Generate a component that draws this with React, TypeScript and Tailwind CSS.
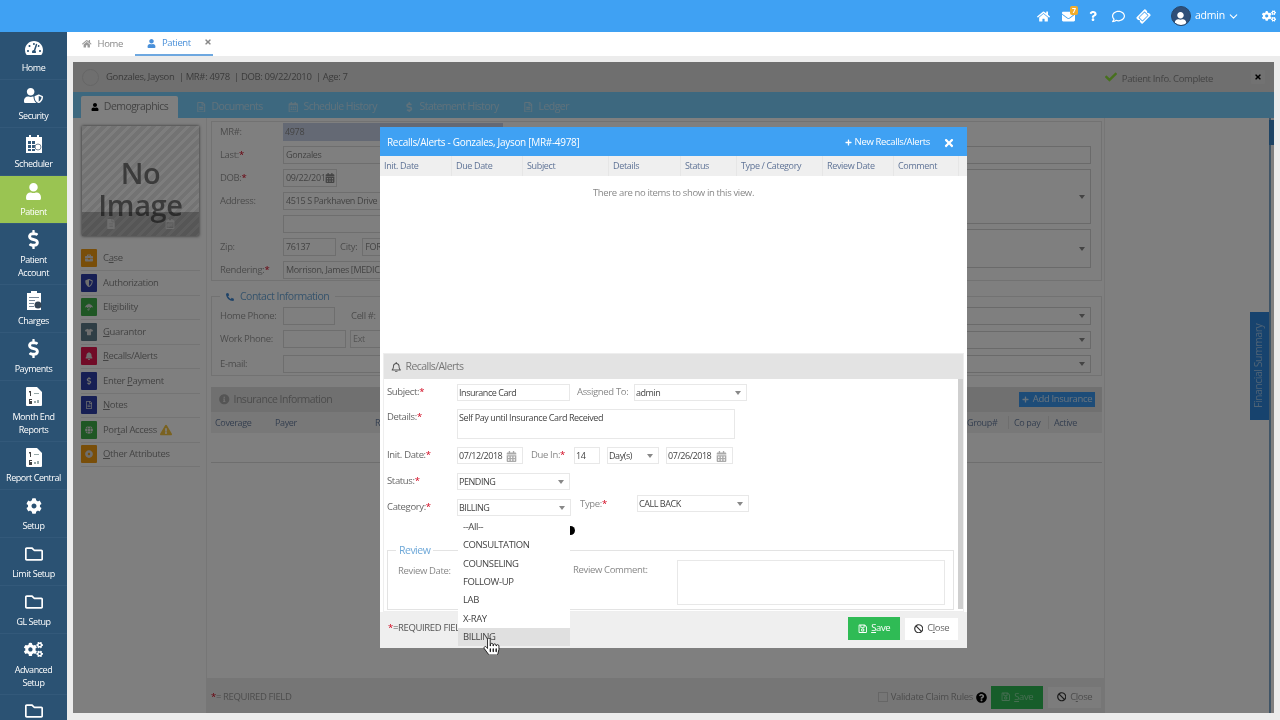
import type { ReactNode } from "react";
import {
  FaBell,
  FaCalendarAlt,
  FaCheck,
  FaCog,
  FaCogs,
  FaDollarSign,
  FaEnvelope,
  FaExclamationTriangle,
  FaFileAlt,
  FaHome,
  FaHandPointer,
  FaInfoCircle,
  FaPhone,
  FaPlus,
  FaQuestion,
  FaQuestionCircle,
  FaRegBell,
  FaRegCalendarAlt,
  FaRegComment,
  FaRegFileAlt,
  FaRegFolder,
  FaRegSave,
  FaShieldAlt,
  FaTachometerAlt,
  FaTicketAlt,
  FaTimes,
  FaUmbrella,
  FaUser,
  FaUserShield,
  FaTshirt,
  FaBan,
  FaGlobe,
  FaDotCircle,
  FaBriefcase,
} from "react-icons/fa";
import { FiChevronDown } from "react-icons/fi";

/* Small white report sheet used by Month End Reports / Report Central */
function ReportSheet() {
  return (
    <svg viewBox="0 0 16 19" className="h-[19px] w-[16px]">
      <path d="M0 1a1 1 0 0 1 1-1h10l5 5v13a1 1 0 0 1-1 1H1a1 1 0 0 1-1-1z" fill="#fff" />
      <path d="M3 4h2v5H4V5.500H3zM3 12h3v1H4v1h2v3H3z" fill="#444" />
      <path d="M8 6h5v1H8zM8 14h2v2H8zM11 13h2v3h-2z" fill="#9aa" />
    </svg>
  );
}

function ChargesSheet() {
  return (
    <svg viewBox="0 0 16 19" className="h-[19px] w-[16px]">
      <path d="M1 2h14v17H1z" fill="#fff" />
      <path d="M5 0h6v3H5z" fill="#fff" />
      <path d="M3 6h10v1H3zM3 9h6v1H3zM3 12h5v1H3zM3 15h5v1H3z" fill="#789" />
      <circle cx="12" cy="14" r="3.500" fill="#345" />
    </svg>
  );
}

/* Calendar sheet with a grid and a small clock, for Scheduler */
function SchedulerSheet() {
  return (
    <svg viewBox="0 0 16 18" className="h-[18px] w-[16px]">
      <path d="M0 2h16v16H0z" fill="#fff" />
      <path d="M3 0h2v3H3zM11 0h2v3h-2z" fill="#fff" />
      <path d="M2 6h3v3H2zM6 6h3v3H6zM2 10h3v3H2zM6 10h3v3H6zM2 14h3v2H2zM6 14h3v2H6z" fill="#33597a" />
      <circle cx="12" cy="12" r="3" fill="none" stroke="#789" />
    </svg>
  );
}

const navItems: { label: ReactNode; icon: ReactNode; h: string; active?: boolean }[] = [
  { label: "Home", icon: <FaTachometerAlt className="text-[18px]" />, h: "h-[48px]" },
  { label: "Security", icon: <FaUserShield className="text-[19px]" />, h: "h-[48px]" },
  { label: "Scheduler", icon: <SchedulerSheet />, h: "h-[48px]" },
  { label: "Patient", icon: <FaUser className="text-[17px]" />, h: "h-[48px]", active: true },
  { label: <>Patient<br />Account</>, icon: <FaDollarSign className="text-[19px]" />, h: "h-[61px]" },
  { label: "Charges", icon: <ChargesSheet />, h: "h-[48px]" },
  { label: "Payments", icon: <FaDollarSign className="text-[19px]" />, h: "h-[48px]" },
  { label: <>Month End<br />Reports</>, icon: <ReportSheet />, h: "h-[61px]" },
  { label: "Report Central", icon: <ReportSheet />, h: "h-[48px]" },
  { label: "Setup", icon: <FaCog className="text-[16px]" />, h: "h-[48px]" },
  { label: "Limit Setup", icon: <FaRegFolder className="text-[18px]" />, h: "h-[48px]" },
  { label: "GL Setup", icon: <FaRegFolder className="text-[18px]" />, h: "h-[48px]" },
  { label: <>Advanced<br />Setup</>, icon: <FaCogs className="text-[19px]" />, h: "h-[61px]" },
  { label: "", icon: <FaRegFolder className="text-[18px]" />, h: "h-[48px]" },
];

const sideLinks: { before?: string; key?: string; after?: string; color: string; icon: ReactNode; warn?: boolean }[] = [
  { before: "C", key: "a", after: "se", color: "bg-[#f39c12]", icon: <FaBriefcase /> },
  { before: "Authorization", color: "bg-[#2f3fa8]", icon: <FaShieldAlt /> },
  { before: "Eli", key: "g", after: "ibility", color: "bg-[#3fae49]", icon: <FaUmbrella /> },
  { key: "G", after: "uarantor", color: "bg-[#5f7d8a]", icon: <FaTshirt /> },
  { key: "R", after: "ecalls/Alerts", color: "bg-[#e3174f]", icon: <FaBell /> },
  { before: "Enter ", key: "P", after: "ayment", color: "bg-[#2f3fa8]", icon: <FaDollarSign /> },
  { key: "N", after: "otes", color: "bg-[#2f3fa8]", icon: <FaRegFileAlt /> },
  { before: "Por", key: "t", after: "al Access", color: "bg-[#3fae49]", icon: <FaGlobe />, warn: true },
  { key: "O", after: "ther Attributes", color: "bg-[#f39c12]", icon: <FaDotCircle /> },
];

function Caret({ className = "" }: { className?: string }) {
  return <span className={`h-0 w-0 shrink-0 border-x-[3.500px] border-t-[4px] border-x-transparent border-t-[#888] ${className}`} />;
}

function Req() {
  return <span className="text-[#d0021b]">*</span>;
}

/* Page form input behind the dim layer */
function PageBox({ children, className = "" }: { children?: ReactNode; className?: string }) {
  return (
    <div className={`flex h-[18px] items-center whitespace-nowrap border border-[#ddd] px-[2px] text-[9px] tracking-[-0.35px] text-[#888] ${className}`}>
      {children}
    </div>
  );
}

function PageRow({ label, children, mt }: { label: ReactNode; children: ReactNode; mt: string }) {
  return (
    <div className={`flex items-center ${mt}`}>
      <span className="w-[63px] shrink-0 whitespace-nowrap text-[#999]">{label}</span>
      {children}
    </div>
  );
}

function PageSelect({ className }: { className: string }) {
  return (
    <div className={`flex items-center justify-end border border-[#d4d4d4] pr-[5px] ${className}`}>
      <Caret className="border-t-[#666]" />
    </div>
  );
}

/* Modal field */
function Field({ children, className = "", arrow, cal }: { children?: ReactNode; className?: string; arrow?: boolean; cal?: boolean }) {
  return (
    <div className={`flex h-[17px] shrink-0 items-center justify-between whitespace-nowrap border border-[#e8e8e8] bg-white pl-[1px] pr-[5px] pt-[1px] text-[9px] tracking-[-0.45px] text-[#444] ${className}`}>
      <span>{children}</span>
      {arrow && <Caret />}
      {cal && <FaCalendarAlt className="shrink-0 text-[11px] text-[#aaa]" />}
    </div>
  );
}

function Label({ children, className = "w-[70px]" }: { children: ReactNode; className?: string }) {
  return <span className={`shrink-0 whitespace-nowrap text-[#666] ${className}`}>{children}</span>;
}

function Sidebar() {
  return (
    <aside className="flex w-[67px] shrink-0 flex-col overflow-hidden bg-[#2b5273] text-white">
      {navItems.map((item, i) => (
        <div
          key={i}
          className={`flex shrink-0 flex-col items-center border-b border-[#33597a] pt-[6px] ${item.h} ${item.active ? "bg-[#9ac452]" : ""}`}
        >
          <div className="flex h-[19px] items-center justify-center">{item.icon}</div>
          <div className="mt-[4px] text-center text-[9px] leading-[13px] tracking-[-0.45px]">{item.label}</div>
        </div>
      ))}
    </aside>
  );
}

function TopIcon({ children }: { children: ReactNode }) {
  return <span className="relative flex w-[25px] justify-center">{children}</span>;
}

function TopBar() {
  return (
    <header className="flex h-[32px] shrink-0 items-center justify-end bg-[#3fa1f3] pr-[4px] text-white">
      <TopIcon><FaHome className="text-[13px]" /></TopIcon>
      <TopIcon>
        <FaEnvelope className="text-[13px]" />
        <span className="absolute left-[14px] -top-[4px] flex h-[9px] w-[8px] items-center justify-center rounded-[2px] bg-[#f0ad2e] text-[7px] font-bold leading-none">
          7
        </span>
      </TopIcon>
      <TopIcon><FaQuestion className="text-[10px]" /></TopIcon>
      <TopIcon><FaRegComment className="text-[13px]" /></TopIcon>
      <TopIcon><FaTicketAlt className="-rotate-45 text-[13px]" /></TopIcon>
      <span className="ml-[15px] mr-[4px] flex h-[20px] w-[20px] items-end justify-center overflow-hidden rounded-full border-[1.500px] border-[#26476b] bg-[#2f4f78]">
        <FaUser className="text-[13px] text-white" />
      </span>
      <span className="text-[10.500px] tracking-[-0.2px]">admin</span>
      <FiChevronDown className="ml-[2px] mr-[22px] text-[13px]" />
      <FaCogs className="text-[14px]" />
    </header>
  );
}

function ImageBox() {
  return (
    <div className="relative ml-[9px] h-[110px] w-[117px] overflow-hidden bg-[repeating-linear-gradient(135deg,#e6e6e6_0px,#e6e6e6_4px,#fafafa_4px,#fafafa_7px)] shadow-[0_0_3px_#555]">
      <div className="pt-[31px] text-center text-[29px] font-semibold leading-[32px] text-[#777]">
        No
        <br />
        Image
      </div>
      <div className="absolute inset-x-0 bottom-0 flex h-[24px] items-center justify-between bg-black/25 px-[24px] text-[10px] text-[#ddd]">
        <FaFileAlt />
        <FaRegCalendarAlt />
      </div>
    </div>
  );
}

function PatientPage() {
  return (
    <div className="relative mx-[6px] mt-[6px] flex h-[651px] flex-col overflow-hidden bg-white text-[9.500px] tracking-[-0.35px]">
      <div className="flex h-[30px] shrink-0 items-center bg-[#dedede] pl-[9px] pr-[9px] text-[#888]">
        <span className="mr-[7px] h-[17px] w-[17px] rounded-full border border-[#ccc]" />
        <span className="mt-[1px] text-[#777]">Gonzales, Jayson &nbsp;| MR#: 4978 &nbsp;| DOB: 09/22/2010 &nbsp;| Age: 7</span>
        <FaCheck className="ml-auto mr-[5px] text-[12px] text-[#8ee03c]" />
        <span className="mr-[38px] mt-[4px]">Patient Info. Complete</span>
        <span className="flex h-[14px] w-[14px] items-center justify-center rounded-[1px] bg-[#e4e4e4] text-[8px] text-black">
          <FaTimes />
        </span>
      </div>

      <div className="flex h-[26px] shrink-0 items-end bg-[#7bd0ff] pl-[8px] text-[10.500px] tracking-[-0.55px] text-[#bfe3f5]">
        <div className="flex h-[22px] w-[97px] items-center justify-center gap-[5px] rounded-t-[2px] bg-white text-[#888]">
          <FaUser className="text-[8px] text-black" />
          Demographics
        </div>
        <div className="ml-[18px] flex h-[22px] w-[92px] items-center gap-[5px]"><FaRegFileAlt />Documents</div>
        <div className="flex h-[22px] w-[116px] items-center gap-[5px]"><FaRegCalendarAlt />Schedule History</div>
        <div className="flex h-[22px] w-[119px] items-center gap-[5px]"><FaDollarSign />Statement History</div>
        <div className="flex h-[22px] items-center gap-[5px]"><FaRegFileAlt />Ledger</div>
      </div>

      <div className="flex min-h-0 flex-1">
        <div className="w-[134px] shrink-0 border-r border-[#ececec] pt-[8px]">
          <ImageBox />
          <div className="ml-[8px] mt-[10.500px] w-[119px]">
            {sideLinks.map((link, i) => (
              <div key={i} className="flex h-[24.500px] items-center border-b border-[#e8e8e8] text-[#888]">
                <span className={`mr-[6px] flex h-[18px] w-[16px] items-center justify-center rounded-[1px] text-[8px] text-[#ddd] ${link.color}`}>
                  {link.icon}
                </span>
                <span className="whitespace-pre">
                  {link.before}
                  {link.key && <u>{link.key}</u>}
                  {link.after}
                </span>
                {link.warn && <FaExclamationTriangle className="ml-[3px] text-[12px] text-[#f5c542]" />}
              </div>
            ))}
          </div>
        </div>

        <div className="flex w-[898px] shrink-0 flex-col border-r border-[#ececec]">
          <div className="ml-[4px] mr-[2px] flex-1 pt-[3px]">
            <div className="flex h-[160px] border border-[#e4e4e4] pl-[8px]">
              <div className="w-[400px] pt-[1px]">
                <PageRow label="MR#:" mt="mt-0"><PageBox className="w-[220px] border-0 bg-[#c8d2e8]">4978</PageBox></PageRow>
                <PageRow label={<>Last:<Req /></>} mt="mt-[5px]"><PageBox className="w-[220px]">Gonzales</PageBox></PageRow>
                <PageRow label={<>DOB:<Req /></>} mt="mt-[5px]">
                  <PageBox className="w-[54px] justify-between">09/22/201<FaCalendarAlt className="shrink-0 text-[10px]" /></PageBox>
                </PageRow>
                <PageRow label="Address:" mt="mt-[5px]"><PageBox className="w-[220px]">4515 S Parkhaven Drive</PageBox></PageRow>
                <PageRow label="" mt="mt-[5px]"><PageBox className="w-[220px]" /></PageRow>
                <PageRow label="Zip:" mt="mt-[5px]">
                  <PageBox className="w-[53px]">76137</PageBox>
                  <span className="ml-[4px] mr-[5px] text-[#999]">City:</span>
                  <PageBox className="w-[140px]">FORT WORTH</PageBox>
                </PageRow>
                <PageRow label={<>Rendering:<Req /></>} mt="mt-[5px]"><PageBox className="w-[220px]">Morrison, James [MEDICAL]</PageBox></PageRow>
              </div>
              <div className="ml-auto mr-[10px] flex w-[390px] flex-col pt-[24px]">
                <div className="h-[18px] border border-[#d4d4d4]" />
                <PageSelect className="mt-[5px] h-[55px]" />
                <PageSelect className="mt-[5px] h-[39px]" />
              </div>
            </div>

            <div className="relative mt-[15px] flex h-[80px] border border-[#e4e4e4] pl-[8px]">
              <span className="absolute -top-[8px] left-[8px] flex items-center gap-[6px] bg-white px-[6px] text-[10.500px] tracking-[-0.5px] text-[#6ea8d8]">
                <FaPhone className="-scale-x-100 text-[8px] text-[#3f86d0]" />
                Contact Information
              </span>
              <div className="w-[400px] pt-[10px]">
                <PageRow label="Home Phone:" mt="mt-0">
                  <PageBox className="w-[52px]" />
                  <span className="ml-[16px] text-[#999]">Cell #:</span>
                </PageRow>
                <PageRow label="Work Phone:" mt="mt-[5px]">
                  <PageBox className="w-[63px]" />
                  <PageBox className="ml-[4px] w-[140px] text-[#aaa]">Ext</PageBox>
                </PageRow>
                <PageRow label="E-mail:" mt="mt-[7px]"><PageBox className="w-[220px]" /></PageRow>
              </div>
              <div className="ml-auto mr-[10px] flex w-[390px] flex-col gap-[6px] pt-[10px]">
                <PageSelect className="h-[18px]" />
                <PageSelect className="h-[18px]" />
                <PageSelect className="h-[18px]" />
              </div>
            </div>

            <div className="mt-[11px] h-[76px] border-b border-[#ddd]">
              <div className="flex h-[25px] items-center justify-between bg-[#e0e0e0] pl-[8px] pr-[7px] text-[10.500px] tracking-[-0.5px] text-[#999]">
                <span className="flex items-center gap-[4px]"><FaInfoCircle className="text-[#aaa]" />Insurance Information</span>
                <span className="flex h-[15px] w-[76px] items-center justify-center gap-[4px] bg-[#3b99f0] text-[9.500px] tracking-[-0.35px] text-[#cfe6fa]">
                  <FaPlus className="text-[7px]" />Add Insurance
                </span>
              </div>
              <div className="flex h-[21px] items-center bg-[#f0f0f0] pl-[4px] text-[9px] text-[#6a7fa0]">
                <span className="w-[60px]">Coverage</span>
                <span className="w-[100px]">Payer</span>
                <span className="w-[592px]">R</span>
                <span className="w-[41px]">Group#</span>
                <span className="w-[40px] border-l border-[#ddd] pl-[5px]">Co pay</span>
                <span className="w-[40px] border-l border-[#ddd] pl-[5px]">Active</span>
              </div>
            </div>
          </div>

          <div className="flex h-[35px] shrink-0 items-center bg-[#ececec] pl-[4px] pr-[3px] pt-[3px] text-[#999]">
            <span><Req />= REQUIRED FIELD</span>
            <span className="ml-auto mr-[3px] h-[10px] w-[10px] border border-[#ccc]" />
            <span className="mr-[3px]">Validate Claim Rules</span>
            <FaQuestionCircle className="mr-[4px] text-[11px] text-black" />
            <span className="flex h-[23px] w-[52px] items-center justify-center gap-[4px] bg-[#2fbb55] text-[#8fdca5]"><FaRegSave /><span><u>S</u>ave</span></span>
            <span className="ml-[5px] flex h-[21px] w-[53px] items-center justify-center gap-[4px] bg-[#f8f8f8]"><FaBan className="text-[#333]" /><span>C<u>l</u>ose</span></span>
          </div>
        </div>

        <div className="flex flex-1 justify-end">
          <div className="relative w-[5px] border-l-2 border-[#7ea8cc]">
            <span className="absolute -left-[2px] top-[2px] h-[25px] w-[5px] bg-[#3a86c8]" />
            <span className="absolute right-[5px] top-[194px] flex h-[108px] w-[19px] items-center justify-center bg-[#2f86dc] text-[10.500px] tracking-[-0.5px] text-[#9fc7ec]">
              <span className="-rotate-90 whitespace-nowrap">Financial Summary</span>
            </span>
          </div>
        </div>
      </div>

      <div className="absolute inset-0 bg-black/50" />
      <RecallsModal />
    </div>
  );
}

const recallCols = [
  ["Init. Date", "w-[72px]"],
  ["Due Date", "w-[71px]"],
  ["Subject", "w-[86px]"],
  ["Details", "w-[72px]"],
  ["Status", "w-[56px]"],
  ["Type / Category", "w-[86px]"],
  ["Review Date", "w-[71px]"],
  ["Comment", "w-[65px]"],
];

const categories = ["--All--", "CONSULTATION", "COUNSELING", "FOLLOW-UP", "LAB", "X-RAY", "BILLING"];

function RecallsModal() {
  return (
    <div className="absolute left-[307px] top-[65px] flex h-[521px] w-[587px] flex-col bg-white">
      <div className="flex h-[29px] shrink-0 items-center bg-[#3fa1f3] pl-[7px] pr-[12px] pt-[2px] text-[10px] tracking-[-0.3px] text-white">
        <span>Recalls/Alerts - Gonzales, Jayson [MR#-4978]</span>
        <span className="ml-auto flex items-center gap-[3px] text-[9.500px] tracking-[-0.35px]"><FaPlus className="text-[7px]" />New Recalls/Alerts</span>
        <FaTimes className="ml-[13px] text-[12px]" />
      </div>
      <div className="flex h-[20px] shrink-0 items-center bg-[#efefef] text-[9px] text-[#5f7396]">
        {recallCols.map(([name, w]) => (
          <span key={name} className={`${w} flex h-full items-center border-r border-[#e6e6e6] pl-[4px]`}>{name}</span>
        ))}
      </div>
      <div className="h-[177px] shrink-0 pt-[10px] text-center text-[#888]">There are no items to show in this view.</div>

      <div className="relative mx-[3px] flex h-[259px] shrink-0 flex-col border border-[#eee]">
        <div className="flex h-[25px] shrink-0 items-center gap-[4px] bg-[#e3e3e3] pl-[7px] pt-[1px] text-[10.500px] tracking-[-0.55px] text-[#777]">
          <FaRegBell className="text-[#555]" />
          Recalls/Alerts
        </div>
        <div className="absolute bottom-[2px] right-[0px] top-[25px] w-[5px] bg-[#cfcfcf]" />

        <div className="pl-[3px] pt-[5px]">
          <div className="flex items-center">
            <Label>Subject:<Req /></Label>
            <Field className="w-[113px]">Insurance Card</Field>
            <Label className="ml-[7px] w-[57px] text-[#888]">Assigned To:</Label>
            <Field className="w-[113px]" arrow>admin</Field>
          </div>
          <div className="mt-[8px] flex items-start">
            <Label className="mt-[1px] w-[70px]">Details:<Req /></Label>
            <div className="h-[30px] w-[278px] border border-[#e8e8e8] pl-[1px] pt-[1px] text-[9px] tracking-[-0.4px] text-[#444]">Self Pay until Insurance Card Received</div>
          </div>
          <div className="mt-[8px] flex items-center">
            <Label>Init. Date:<Req /></Label>
            <Field className="w-[66px]" cal>07/12/2018</Field>
            <Label className="ml-[8px] w-[43px] text-[#888]">Due In:<Req /></Label>
            <Field className="w-[26px]">14</Field>
            <Field className="ml-[7px] w-[52px]" arrow>Day(s)</Field>
            <Field className="ml-[7px] w-[67px]" cal>07/26/2018</Field>
          </div>
          <div className="mt-[9px] flex items-center">
            <Label>Status:<Req /></Label>
            <Field className="w-[113px]" arrow>PENDING</Field>
          </div>
          <div className="mt-[9px] flex items-start">
            <Label className="mt-[1px] w-[70px]">Category:<Req /></Label>
            <Field className="w-[114px] border-[#6f9fc8]" arrow>BILLING</Field>
            <Label className="ml-[9px] -mt-[2px] w-[57px] text-[#888]">Type:<Req /></Label>
            <Field className="-mt-[4px] w-[112px]" arrow>CALL BACK</Field>
          </div>
        </div>

        <div className="relative ml-[3px] mr-[9px] mt-[34px] h-[60px] border border-[#e3e3e3]">
          <span className="absolute -top-[8px] left-[8px] bg-white px-[3px] text-[10.500px] tracking-[-0.5px] text-[#6ea8d8]">Review</span>
          <div className="flex items-start pl-[10px] pr-[8px] pt-[9px]">
            <Label className="mt-[4px] w-[175px] text-[#888]">Review Date:</Label>
            <Label className="mt-[3px] w-[104px] text-[#888]">Review Comment:</Label>
            <div className="h-[45px] flex-1 border border-[#e8e8e8]" />
          </div>
        </div>

        {/* Open category list, over the review box */}
        <span className="absolute left-[182px] top-[172px] h-[9px] w-[9px] rounded-full bg-black" />
        <div className="absolute left-[74px] top-[164px] w-[112px] bg-white text-[9.500px] tracking-[-0.4px] text-[#444]">
          {categories.map((c) => (
            <div key={c} className={`flex h-[18.300px] items-center pl-[5px] ${c === "BILLING" ? "bg-[#e0e0e0]" : ""}`}>{c}</div>
          ))}
        </div>
      </div>

      <div className="flex flex-1 items-center bg-[#efefef] pb-[3px] pl-[8px] pr-[9px] text-[#555]">
        <span><Req />=REQUIRED FIEL</span>
        <span className="ml-auto flex h-[23px] w-[52px] items-center justify-center gap-[4px] bg-[#2fbb55] text-white"><FaRegSave /><span><u>S</u>ave</span></span>
        <span className="ml-[5px] flex h-[22px] w-[53px] items-center justify-center gap-[4px] bg-white text-[#666]"><FaBan className="text-[#333]" /><span>C<u>l</u>ose</span></span>
      </div>

      <FaHandPointer className="absolute left-[103px] top-[511px] stroke-black stroke-[24px] text-[17px] text-white" />
    </div>
  );
}

export default function App() {
  return (
    <div className="flex h-[720px] w-[1280px] flex-col overflow-hidden bg-[#ececec] font-['Open_Sans',sans-serif] blur-[0.4px]">
      <TopBar />
      <div className="flex min-h-0 flex-1">
        <Sidebar />
        <main className="min-w-0 flex-1">
          <div className="flex h-[24px] items-center bg-white pl-[15px] text-[9.500px] tracking-[-0.35px] text-[#888]">
            <span className="flex w-[53px] items-center gap-[6px]"><FaHome className="text-[#999]" />Home</span>
            <span className="relative flex h-full w-[78px] items-center gap-[6px] border-b-2 border-[#6ea8e0] pl-[12px] text-[#4a90d9]">
              <FaUser className="text-[9px]" />Patient
              <FaTimes className="absolute right-[1px] top-[6px] text-[8px] text-[#888]" />
            </span>
          </div>
          <PatientPage />
        </main>
      </div>
    </div>
  );
}
